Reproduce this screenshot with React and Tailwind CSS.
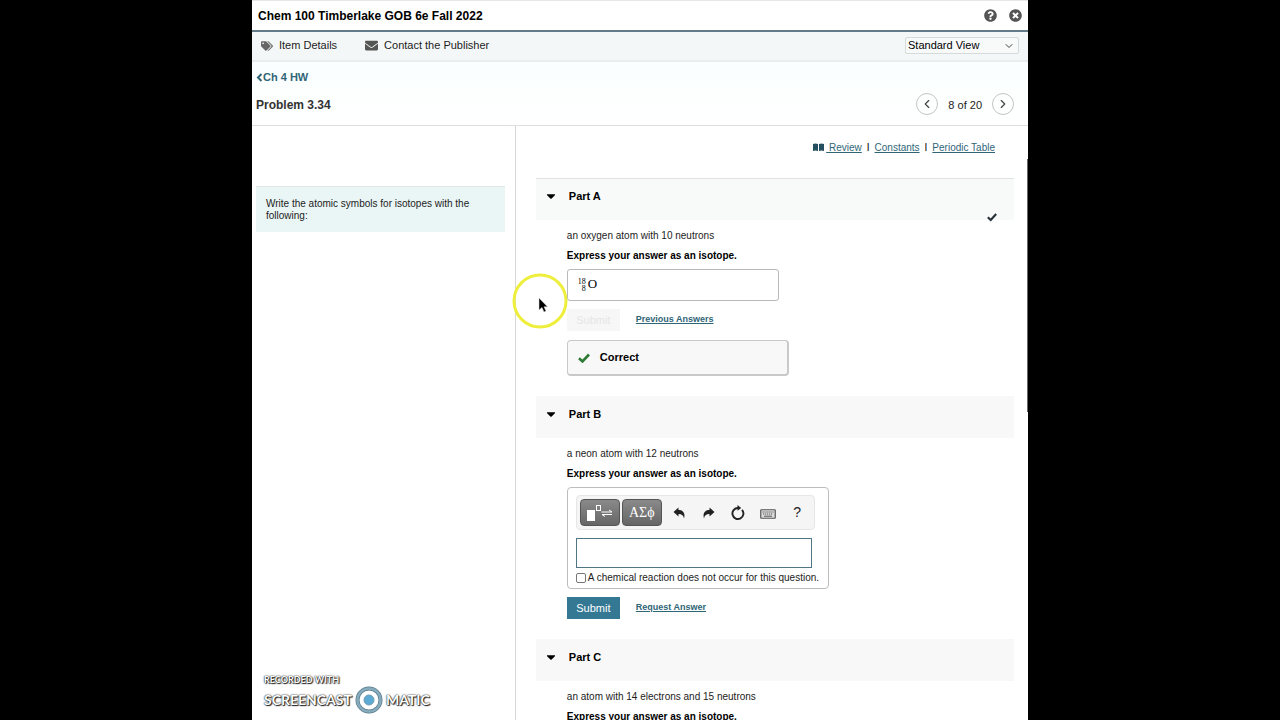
import { FaCaretDown, FaEnvelope, FaQuestionCircle, FaTags, FaTimesCircle } from "react-icons/fa";
import { ChevronDown, ChevronLeft, ChevronRight } from "lucide-react";

const TopBar = () => (
  <header className="flex h-8 items-center justify-between border-t border-t-gray-200 border-b-2 border-b-[#637a88] bg-white pl-1.5 pr-1.5">
    <h1 className="text-[12px] font-bold text-black">Chem 100 Timberlake GOB 6e Fall 2022</h1>
    <div className="flex items-center gap-3 text-[#555]">
      <button aria-label="Help">
        <FaQuestionCircle size={13} />
      </button>
      <button aria-label="Close">
        <FaTimesCircle size={13} />
      </button>
    </div>
  </header>
);

const Toolbar = () => (
  <nav className="flex h-[30px] items-center border-b-2 border-[#e9eded] bg-[#f4f7f7] pb-px pl-[9px] pr-[9px] text-[11px]">
    <a href="#details" className="flex items-center gap-1.5">
      <FaTags size={12} className="text-[#666]" />
      Item Details
    </a>
    <a href="#contact" className="ml-7 flex items-center gap-1.5">
      <FaEnvelope size={13} className="text-[#555]" />
      Contact the Publisher
    </a>
    <div className="relative ml-auto w-[114px]">
      <select
        aria-label="View"
        className="h-[17px] w-full appearance-none rounded-xs border border-[#d5dada] bg-[#f8fafa] pl-0.5 text-[11px] leading-[15px] text-black"
      >
        <option>Standard View</option>
      </select>
      <ChevronDown size={12} className="pointer-events-none absolute right-1 top-[3px] text-[#444]" />
    </div>
  </nav>
);

const ProblemHeader = () => (
  <div className="flex h-16 justify-between border-b border-[#dedede] bg-linear-to-b from-[#fafefe] to-white pl-1 pr-3.5">
    <div className="flex flex-col pt-1.5">
      <a href="#hw" className="flex items-center text-[11px] font-bold leading-[18px] text-[#306577]">
        <svg width="7" height="9" viewBox="0 0 7 9" fill="none" aria-hidden="true">
          <path d="M5.5 1 2 4.5 5.5 8" stroke="currentColor" strokeWidth="2" />
        </svg>
        Ch 4 HW
      </a>
      <h2 className="mt-2.5 text-[12px] font-bold leading-[18px] text-[#333]">Problem 3.34</h2>
    </div>
    <div className="flex items-start gap-2.5 pt-[31px] text-[11px]">
      <button
        aria-label="Previous problem"
        className="flex size-[22px] items-center justify-center rounded-full border border-[#c4c4c4] text-[#444]"
      >
        <ChevronLeft size={14} />
      </button>
      <span className="leading-6">8 of 20</span>
      <button
        aria-label="Next problem"
        className="flex size-[22px] items-center justify-center rounded-full border border-[#c4c4c4] text-[#444]"
      >
        <ChevronRight size={14} />
      </button>
    </div>
  </div>
);

const BookIcon = () => (
  <svg width="11" height="9" viewBox="0 0 11 9" fill="#234f60" aria-hidden="true">
    <path d="M0 1Q2.5 0 5 1V8Q2.5 7 0 8ZM6 1Q8.5 0 11 1V8Q8.5 7 6 8Z" />
  </svg>
);

const ResourceLinks = () => (
  <div className="flex h-[52px] items-center justify-end gap-[5px] pb-[9px] pr-[19px] text-[10px] text-[#306577]">
    <div className="flex items-center gap-0.5">
      <BookIcon />
      <a href="#review" className="whitespace-pre underline">
        {" Review"}
      </a>
    </div>
    <span className="text-black">I</span>
    <a href="#constants" className="underline">
      Constants
    </a>
    <span className="text-black">I</span>
    <a href="#table" className="underline">
      Periodic Table
    </a>
  </div>
);

const CheckIcon = ({ size, className }) => (
  <svg width={size} height={size} viewBox="0 0 12 12" fill="none" className={className} aria-hidden="true">
    <path d="M1 6.2 4.5 9.5 11 2.5" stroke="currentColor" strokeWidth="2.6" />
  </svg>
);

const Part = ({ name, prompt, done, children }) => (
  <section className="mb-5">
    <div
      className={`relative h-[42px] pl-[9px] ${
        done ? "border-t border-[#e2e2e2] bg-[#f8f9f9] pt-[7px]" : "bg-[#f8f8f8] pt-2"
      }`}
    >
      <button className="flex items-center gap-3 text-[11px] font-bold leading-5 text-black">
        <FaCaretDown size={14} className="-mx-px" />
        <span>{name}</span>
      </button>
      {done && <CheckIcon size={10} className="absolute bottom-[-2px] right-[17px] text-[#263238]" />}
    </div>
    <div className="pl-[31px] pr-4 pt-1.5 text-[10px]">
      <p className="leading-5">{prompt}</p>
      <p className="font-bold leading-5 text-black">Express your answer as an isotope.</p>
      {children}
    </div>
  </section>
);

const Isotope = () => (
  <span className="flex h-4 items-center font-['Liberation_Serif',serif] text-black">
    <span className="flex flex-col items-end text-[8px] leading-[7px]">
      <span>18</span>
      <span>8</span>
    </span>
    <span className="ml-0.5 pb-0.5 text-[13px] leading-4">O</span>
  </span>
);

const SolvedAnswer = () => (
  <>
    <div className="mt-[3px] flex h-8 w-full max-w-[212px] rounded-[3px] border border-[#b9b9b9] bg-white pl-2.5 pt-[7px]">
      <Isotope />
    </div>
    <div className="mt-2 flex items-center gap-4">
      <button disabled className="h-[22px] w-[53px] bg-[#f7f7f7] text-[11px] text-[#e6e6e6]">
        Submit
      </button>
      <a href="#previous" className="text-[9px] font-bold text-[#306577] underline">
        Previous Answers
      </a>
    </div>
    <div className="mt-[9px] flex h-9 w-full max-w-[222px] items-center gap-2.5 rounded-[4px] border border-b-2 border-r-2 border-[#c9c9c9] bg-[#f8f8f8] pl-2.5 text-[11px] font-bold text-black">
      <CheckIcon size={12} className="text-[#2c7a34]" />
      Correct
    </div>
  </>
);

const UndoIcon = ({ className }) => (
  <svg width="13" height="12" viewBox="0 0 13 12" fill="currentColor" className={className} aria-hidden="true">
    <path d="M5.5 0.5V3C10 3 12.5 6 11 11.5C10.6 8.5 9 7 5.5 7V9.5L0.5 5Z" />
  </svg>
);

const ReloadIcon = () => (
  <svg width="16" height="16" viewBox="0 0 16 16" fill="none" aria-hidden="true">
    <path d="M12 4.8A5.5 5.5 0 1 1 8 3" stroke="currentColor" strokeWidth="1.9" />
    <path d="M7.5 0 11.2 3 7.5 5.8Z" fill="currentColor" />
  </svg>
);

const KeyboardIcon = () => (
  <svg width="16" height="10" viewBox="0 0 16 10" fill="none" aria-hidden="true">
    <rect x="0.75" y="0.75" width="14.5" height="8.5" rx="0.5" fill="#ddd" stroke="#555" strokeWidth="1.2" />
    <path d="M2.5 3H13.5M3 5H13" stroke="#555" strokeWidth="1.2" strokeDasharray="1.2 0.8" />
    <path d="M4 7.2H12" stroke="#555" />
  </svg>
);

const TemplateIcon = () => (
  <svg width="30" height="20" viewBox="0 0 30 20" fill="none" stroke="white" aria-hidden="true">
    <rect x="2" y="7" width="8" height="11" fill="white" stroke="none" />
    <rect x="11.5" y="2.5" width="4" height="5" />
    <path d="M16.5 9H27L24 7M27 11.5H17L20 13.5" />
  </svg>
);

const EquationEditor = () => (
  <>
    <div className="mt-[3px] h-[102px] w-full max-w-[262px] rounded-[4px] border border-[#bdbdbd] bg-white px-2 pt-[7px]">
      <div className="flex h-[35px] w-full max-w-[239px] items-center rounded-[4px] border border-[#e6e6e6] bg-[#f5f5f5] pl-[3px]">
        <button
          aria-label="Templates"
          className="flex h-[27px] w-10 items-center justify-center rounded-[4px] border border-[#555] bg-linear-to-b from-[#8a8a8a] to-[#666]"
        >
          <TemplateIcon />
        </button>
        <button className="ml-0.5 h-[27px] w-10 rounded-[4px] border border-[#555] bg-linear-to-b from-[#8a8a8a] to-[#666] font-['Liberation_Serif','DejaVu_Serif',serif] text-[14px] leading-6 text-white">
          ΑΣϕ
        </button>
        <div className="grid flex-1 grid-cols-5 justify-items-center pl-[3px] pr-0.5 text-[#222]">
          <button aria-label="Undo">
            <UndoIcon />
          </button>
          <button aria-label="Redo">
            <UndoIcon className="-scale-x-100" />
          </button>
          <button aria-label="Reset">
            <ReloadIcon />
          </button>
          <button aria-label="Keyboard shortcuts" className="pt-0.5">
            <KeyboardIcon />
          </button>
          <button aria-label="Help" className="text-[14px]">
            ?
          </button>
        </div>
      </div>
      <input
        aria-label="Answer"
        className="mt-2 block h-[30px] w-full max-w-[236px] border border-[#4f7586] bg-white px-2"
      />
      <label className="mt-0.5 flex items-center gap-0.5 whitespace-nowrap text-[10px] leading-4">
        <input
          type="checkbox"
          className="size-[10px] shrink-0 appearance-none rounded-xs border border-[#777] bg-white"
        />
        A chemical reaction does not occur for this question.
      </label>
    </div>
    <div className="mt-2 flex items-center gap-4">
      <button className="h-[22px] w-[53px] bg-[#347894] text-[11px] text-white">Submit</button>
      <a href="#request" className="text-[9px] font-bold text-[#306577] underline">
        Request Answer
      </a>
    </div>
  </>
);

const Watermark = () => (
  <div className="absolute bottom-1.5 left-3 font-[Lato,sans-serif] font-bold text-white [text-shadow:0_0_1px_#111,1px_1px_1px_#222,0_0_2px_#444]">
    <p className="text-[9px] leading-3">RECORDED WITH</p>
    <div className="flex items-center gap-[3px] text-[14px] leading-[26px]">
      <span>SCREENCAST</span>
      <svg width="28" height="28" viewBox="0 0 28 28" aria-hidden="true">
        <circle cx="14" cy="14" r="11.5" fill="white" stroke="#5d7d8c" strokeWidth="4" />
        <circle cx="14" cy="14" r="11.5" fill="none" stroke="#86abbc" strokeWidth="2.5" />
        <circle cx="14" cy="14" r="5" fill="#5babd4" stroke="#6f9cb2" />
      </svg>
      <span>MATIC</span>
    </div>
  </div>
);

const Pointer = () => (
  <svg
    className="pointer-events-none absolute left-[260px] top-[272px]"
    width="56"
    height="58"
    viewBox="0 0 56 58"
    fill="none"
    aria-hidden="true"
  >
    <circle cx="28" cy="29" r="26" stroke="#eeee3d" strokeWidth="3" />
    <path d="M27 26V38L30 35.5L32 40L34 39L32 34.8H35.5Z" fill="black" stroke="#ddd" strokeWidth="0.5" />
  </svg>
);

export default function App() {
  return (
    <div className="h-screen bg-black font-['Liberation_Sans',Arial,sans-serif] text-[#1c1c1c]">
      <div className="relative mx-auto flex h-full w-full max-w-[776px] flex-col overflow-hidden bg-white">
        <TopBar />
        <Toolbar />
        <ProblemHeader />
        <main className="flex min-h-0 flex-1">
          <aside className="w-[34%] shrink-0 border-r border-[#d8d8d8] pl-1 pr-2.5 pt-[60px]">
            <p className="border-t border-[#dce7e7] bg-[#eaf5f5] px-2.5 pb-2.5 pt-[11px] text-[10px] leading-3">
              Write the atomic symbols for isotopes with the following:
            </p>
          </aside>
          <div className="min-w-0 flex-1 overflow-hidden pl-5 pr-3.5">
            <ResourceLinks />
            <Part name="Part A" prompt="an oxygen atom with 10 neutrons" done>
              <SolvedAnswer />
            </Part>
            <Part name="Part B" prompt="a neon atom with 12 neutrons">
              <EquationEditor />
            </Part>
            <Part name="Part C" prompt="an atom with 14 electrons and 15 neutrons" />
          </div>
        </main>
        {/* scroll thumb */}
        <div className="absolute right-0 top-[159px] h-[253px] w-px bg-[#666]" />
        <Watermark />
        <Pointer />
      </div>
    </div>
  );
}
